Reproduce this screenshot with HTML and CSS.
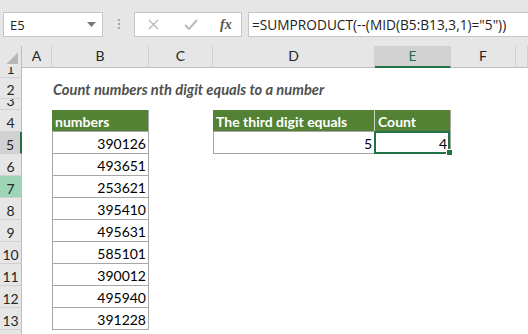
FILE: index.html
```html
<!DOCTYPE html>
<html lang="en">

<head>
    <meta charset="UTF-8">
    <meta name="viewport" content="width=device-width, initial-scale=1.0">
    <title>Count numbers nth digit</title>
    <link rel="stylesheet" href="styles.css">
</head>

<body>
    <!-- formula bar -->
    <div class="formula-bar">
        <div class="name-box">
            <span>E5</span>
            <svg width="9" height="5" viewBox="0 0 9 5"><path d="M0 0H9L4.5 5Z" fill="#777" /></svg>
        </div>
        <div class="grip"><i></i><i></i><i></i></div>
        <div class="fx-buttons">
            <svg class="btn-x" width="11" height="11" viewBox="0 0 11 11">
                <path d="M1 1L10 10M10 1L1 10" stroke="#b9b9b9" stroke-width="1.4" fill="none" />
            </svg>
            <svg class="btn-ok" width="14" height="11" viewBox="0 0 14 11">
                <path d="M1 6L5 10L13 1" stroke="#b9b9b9" stroke-width="2" fill="none" />
            </svg>
            <span class="btn-fx">fx</span>
        </div>
        <div class="formula-input">=SUMPRODUCT(--(MID(B5:B13,3,1)="5"))</div>
    </div>

    <!-- sheet -->
    <div class="sheet">
        <div class="row col-heads">
            <div class="corner"></div>
            <div>A</div>
            <div>B</div>
            <div>C</div>
            <div>D</div>
            <div class="col-active">E</div>
            <div>F</div>
            <div></div>
        </div>

        <div class="row h11">
            <div class="rh">1</div>
        </div>

        <div class="row h21">
            <div class="rh">2</div>
            <div></div>
            <div class="title">Count numbers nth digit equals to a number</div>
        </div>

        <div class="row h11">
            <div class="rh">3</div>
        </div>

        <div class="row h22">
            <div class="rh">4</div>
            <div></div>
            <div class="cell hd hd-end">numbers</div>
            <div></div>
            <div class="cell hd hd-mid">The third digit equals</div>
            <div class="cell hd hd-end">Count</div>
        </div>

        <div class="row h22">
            <div class="rh row-active">5</div>
            <div></div>
            <div class="cell num tb tb-l">390126</div>
            <div></div>
            <div class="cell num tb tb-l">5</div>
            <div class="cell num tb sel">4</div>
        </div>

        <div class="row h22">
            <div class="rh">6</div>
            <div></div>
            <div class="cell num tb tb-l">493651</div>
        </div>

        <div class="row h22">
            <div class="rh row-hl">7</div>
            <div></div>
            <div class="cell num tb tb-l">253621</div>
        </div>

        <div class="row h22">
            <div class="rh">8</div>
            <div></div>
            <div class="cell num tb tb-l">395410</div>
        </div>

        <div class="row h22">
            <div class="rh">9</div>
            <div></div>
            <div class="cell num tb tb-l">495631</div>
        </div>

        <div class="row h22">
            <div class="rh">10</div>
            <div></div>
            <div class="cell num tb tb-l">585101</div>
        </div>

        <div class="row h22">
            <div class="rh">11</div>
            <div></div>
            <div class="cell num tb tb-l">390012</div>
        </div>

        <div class="row h22">
            <div class="rh">12</div>
            <div></div>
            <div class="cell num tb tb-l">495940</div>
        </div>

        <div class="row h22">
            <div class="rh">13</div>
            <div></div>
            <div class="cell num tb tb-l">391228</div>
        </div>

        <div class="row h22">
            <div class="rh">14</div>
        </div>
    </div>
</body>

</html>
```

FILE: styles.css
```css
body {
    margin: 0;
    width: 528px;
    height: 334px;
    overflow: hidden;
    background: #fff;
    font-family: Lato, 'Open Sans', sans-serif;
    color: #000;
}

/* formula bar */
.formula-bar {
    height: 46px;
    box-sizing: border-box;
    padding-top: 12px;
    background: #e6e6e6;
    display: flex;
    align-items: flex-start;
}

.name-box {
    margin-left: 3px;
    width: 100px;
    height: 25px;
    box-sizing: border-box;
    background: #fff;
    border: 1px solid #c6c6c6;
    display: flex;
    align-items: center;
    justify-content: space-between;
    padding: 0 6px 0 6px;
    font-family: 'Open Sans', sans-serif;
    font-size: 13px;
    color: #222;
}

.grip {
    width: 31px;
    padding-top: 7px;
    display: flex;
    flex-direction: column;
    align-items: center;
    gap: 2px;
}

.grip i {
    width: 2px;
    height: 2px;
    background: #a8a8a8;
}

.fx-buttons {
    width: 108px;
    height: 25px;
    box-sizing: border-box;
    background: #fff;
    border: 1px solid #c6c6c6;
    display: flex;
    align-items: center;
    padding-left: 13px;
}

.btn-ok {
    margin-left: 25px;
}

.btn-fx {
    margin-left: 22px;
    font-family: 'Liberation Serif', serif;
    font-style: italic;
    font-weight: bold;
    font-size: 14px;
    color: #555;
}

.formula-input {
    flex: 1;
    margin-left: 6px;
    height: 25px;
    box-sizing: border-box;
    background: #fff;
    border: 1px solid #c6c6c6;
    border-right: none;
    padding-left: 3px;
    font-family: 'Open Sans', sans-serif;
    font-size: 13.7px;
    line-height: 23px;
    color: #222;
    white-space: nowrap;
}

/* sheet grid */
.row {
    display: grid;
    grid-template-columns: 22px 30px 97px 64px 162px 76px 65px 1fr;
}

.row > div {
    box-sizing: border-box;
    min-width: 0;
}

.h11 {
    height: 11px;
}

.h21 {
    height: 21px;
}

.h22 {
    height: 22px;
}

.col-heads {
    height: 21px;
}

.col-heads > div {
    background: #e6e6e6;
    border-right: 1px solid #cfcfcf;
    border-bottom: 1px solid #bdbdbd;
    text-align: center;
    font-size: 14px;
    line-height: 20px;
    color: #262626;
}

.col-heads .corner {
    border-right-color: #bdbdbd;
    background-image: linear-gradient(to bottom right, transparent 50%, #b6b6b6 50%);
    background-size: 11px 11px;
    background-position: right 3px bottom 3px;
    background-repeat: no-repeat;
}

.col-heads .col-active {
    background: #d2d2d2;
    border-bottom: 2px solid #217346;
    color: #217346;
}

.rh {
    background: #e6e6e6;
    border-right: 1px solid #bdbdbd;
    border-bottom: 1px solid #d0d0d0;
    display: flex;
    align-items: flex-end;
    justify-content: center;
    overflow: hidden;
    font-size: 14px;
    line-height: 17px;
    color: #262626;
}

.rh.row-active {
    background: #d2d2d2;
    border-right: 2px solid #217346;
}

.rh.row-hl {
    background: #9fd5b7;
}

/* cells */
.cell {
    display: flex;
    align-items: flex-end;
    font-size: 14px;
    line-height: 18px;
    white-space: nowrap;
    padding: 0 2px;
}

.title {
    display: flex;
    align-items: flex-end;
    white-space: nowrap;
    overflow: visible;
    padding-left: 1px;
    padding-bottom: 1px;
    font-size: 14.7px;
    line-height: 18px;
    font-style: italic;
    font-weight: bold;
    color: #505050;
}

.hd {
    background: #548235;
    color: #fff;
    font-weight: bold;
    border-bottom: 1px solid #a6a6a6;
    padding-left: 3px;
}

.hd-mid {
    border-right: 1px solid #c9d6c0;
}

.hd-end {
    border-right: 1px solid #a6a6a6;
}

.num {
    justify-content: flex-end;
}

.tb {
    border-right: 1px solid #a6a6a6;
    border-bottom: 1px solid #a6a6a6;
}

.tb-l {
    border-left: 1px solid #a6a6a6;
}

/* active cell E5 */
.sel {
    position: relative;
    padding-right: 3px;
}

.sel::after {
    content: "";
    position: absolute;
    left: -1px;
    top: -1px;
    right: 0;
    bottom: -1px;
    border: 2px solid #217346;
}

.sel::before {
    content: "";
    position: absolute;
    right: -3px;
    bottom: -3px;
    width: 5px;
    height: 5px;
    background: #217346;
    border: 1px solid #fff;
    z-index: 1;
}
```
